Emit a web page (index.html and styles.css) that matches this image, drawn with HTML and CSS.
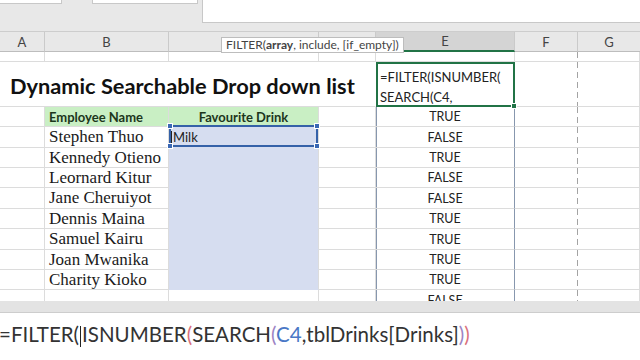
FILE: index.html
```html
<!DOCTYPE html>
<html lang="en">
<head>
    <meta charset="UTF-8">
    <title>Dynamic Searchable Drop down list</title>
    <link rel="stylesheet" href="styles.css">
</head>
<body>

    <div class="ribbon">
        <div class="box box-name"></div>
        <div class="box box-mid"></div>
        <div class="box box-wide"></div>
    </div>

    <div class="sheet">
        <!-- column headers (C and D sit under the tooltip) -->
        <div class="cell hd">A</div>
        <div class="cell hd">B</div>
        <div class="cell hd"></div>
        <div class="cell hd"></div>
        <div class="cell hd hd-on">E</div>
        <div class="cell hd">F</div>
        <div class="cell hd hd-last">G</div>

        <!-- row 1 -->
        <div class="cell"></div><div class="cell"></div><div class="cell"></div><div class="cell"></div>
        <div class="cell"></div><div class="cell pb"></div><div class="cell"></div>

        <!-- row 2 -->
        <div class="cell title">Dynamic Searchable Drop down list</div>
        <div class="cell edit">
            =FILTER(ISNUMBER(<br>SEARCH(C4,
            <span class="handle handle-br green"></span>
        </div>
        <div class="cell pb"></div><div class="cell"></div>

        <!-- row 3 -->
        <div class="cell"></div>
        <div class="cell th">Employee Name</div>
        <div class="cell th th-c">Favourite Drink</div>
        <div class="cell"></div>
        <div class="cell spill">TRUE</div>
        <div class="cell pb"></div><div class="cell"></div>

        <!-- row 4 -->
        <div class="cell"></div>
        <div class="cell name">Stephen Thuo</div>
        <div class="cell fill selected">
            <span class="caret small"></span>Milk
            <span class="sel">
                <span class="handle handle-tl"></span>
                <span class="handle handle-tr"></span>
                <span class="handle handle-bl"></span>
                <span class="handle handle-br"></span>
            </span>
        </div>
        <div class="cell"></div>
        <div class="cell spill">FALSE</div>
        <div class="cell pb"></div><div class="cell"></div>

        <!-- row 5 -->
        <div class="cell"></div>
        <div class="cell name">Kennedy Otieno</div>
        <div class="cell fill"></div>
        <div class="cell"></div>
        <div class="cell spill">TRUE</div>
        <div class="cell pb"></div><div class="cell"></div>

        <!-- row 6 -->
        <div class="cell"></div>
        <div class="cell name">Leornard Kitur</div>
        <div class="cell fill"></div>
        <div class="cell"></div>
        <div class="cell spill">FALSE</div>
        <div class="cell pb"></div><div class="cell"></div>

        <!-- row 7 -->
        <div class="cell"></div>
        <div class="cell name">Jane Cheruiyot</div>
        <div class="cell fill"></div>
        <div class="cell"></div>
        <div class="cell spill">FALSE</div>
        <div class="cell pb"></div><div class="cell"></div>

        <!-- row 8 -->
        <div class="cell"></div>
        <div class="cell name">Dennis Maina</div>
        <div class="cell fill"></div>
        <div class="cell"></div>
        <div class="cell spill">TRUE</div>
        <div class="cell pb"></div><div class="cell"></div>

        <!-- row 9 -->
        <div class="cell"></div>
        <div class="cell name">Samuel Kairu</div>
        <div class="cell fill"></div>
        <div class="cell"></div>
        <div class="cell spill">TRUE</div>
        <div class="cell pb"></div><div class="cell"></div>

        <!-- row 10 -->
        <div class="cell"></div>
        <div class="cell name">Joan Mwanika</div>
        <div class="cell fill"></div>
        <div class="cell"></div>
        <div class="cell spill">TRUE</div>
        <div class="cell pb"></div><div class="cell"></div>

        <!-- row 11 -->
        <div class="cell"></div>
        <div class="cell name">Charity Kioko</div>
        <div class="cell fill"></div>
        <div class="cell"></div>
        <div class="cell spill">TRUE</div>
        <div class="cell pb"></div><div class="cell"></div>

        <!-- row 12 -->
        <div class="cell"></div><div class="cell"></div><div class="cell"></div><div class="cell"></div>
        <div class="cell spill">FALSE</div>
        <div class="cell pb"></div><div class="cell"></div>

        <div class="tip">FILTER(<b>array</b>, include, [if_empty])</div>
    </div>

    <div class="band"></div>

    <div class="formula">=FILTER(<span class="caret"></span>ISNUMBER<span class="p1">(</span>SEARCH<span class="p2">(</span><span class="ref">C4</span>,tblDrinks[Drinks]<span class="p2">)</span><span class="p1">)</span></div>

</body>
</html>
```

FILE: styles.css
```css
* { margin: 0; padding: 0; box-sizing: border-box; }
body {
    width: 640px; height: 360px; overflow: hidden; background: #fff;
    font-family: 'Lato', 'Liberation Sans', sans-serif; color: #222;
}

/* top strip (name box / formula area) */
.ribbon {
    height: 32px; background: #e8e8e8; display: flex; align-items: flex-start;
    border-bottom: 1px solid #cdcdcd;
}
.box { background: #fff; border: 1px solid #c8c8c8; border-top: none; }
.box-name { width: 62px; height: 4px; margin-right: 30px; border-left: none; }
.box-mid { width: 106px; height: 4px; margin-right: 4px; }
.box-wide { flex: 1; height: 23px; border-right: none; }

/* grid */
.sheet {
    position: relative; height: 269px; overflow: hidden; display: grid;
    grid-template-columns: 45px 124px 150px 57px 139px 63px 62px;
    grid-template-rows: 20px 10px 45px 20px 21px 20px 20px 21px 20px 21px 20px 20px 21px 20px;
}
.cell {
    border-right: 1px solid #dcdcdc; border-bottom: 1px solid #dcdcdc;
    font-size: 13px; display: flex; align-items: center; white-space: nowrap;
}
.hd {
    background: #e8e8e8; border-right-color: #cacaca; border-bottom-color: #bdbdbd;
    justify-content: center; color: #444; font-size: 13px;
}
.hd-on { background: #d4d4d4; border-bottom: 2px solid #217346; }
.hd-last { border-right: none; }

.pb {
    border-right: none;
    background: repeating-linear-gradient(to bottom, #a3a3a3 0 6px, transparent 6px 10px) right top / 1px 100% no-repeat;
}

.title {
    grid-column: span 4; font-weight: bold; font-size: 21.8px; padding: 3px 0 0 10px;
    color: #111; border-right-color: transparent;
}
.edit {
    display: block; position: relative; border: 2px solid #217346;
    padding: 3px 0 0 2px; line-height: 20px; font-size: 13px; color: #222;
}

.th { background: #c9efc4; font-weight: bold; font-size: 13px; color: #1c361c; padding-left: 4px; }
.th-c { justify-content: center; padding-left: 0; }

.name {
    font-family: 'Liberation Serif', serif; font-size: 17px; padding-left: 4px; color: #1a1a1a;
}
.fill { background: #d6ddf0; border-bottom-color: #d6ddf0; }

.selected { position: relative; padding-left: 2px; font-size: 13px; }
.sel {
    position: absolute; left: 0; right: 0; top: -2px; bottom: 0;
    border: 2px solid #3561a8;
}
.handle {
    position: absolute; width: 6px; height: 6px; background: #3a68b4;
    border: 1px solid #fff;
}
.handle.green { background: #217346; right: -4px; bottom: -4px; }
.handle-tl { left: -4px; top: -4px; }
.handle-tr { right: -4px; top: -4px; }
.handle-bl { left: -4px; bottom: -4px; }
.handle-br { right: -4px; bottom: -4px; }

.spill {
    justify-content: center; font-size: 12.5px; color: #222;
    border-right-color: #8797ae; box-shadow: inset 1px 0 #8797ae;
}

.caret { display: inline-block; width: 1px; height: 21px; background: #222; vertical-align: middle; margin: 0 1px; }
.caret.small { height: 13px; margin: 0 1px 0 0; }

.tip {
    position: absolute; left: 221px; top: 5px; height: 16px; padding: 0 4px;
    background: #fff; border: 1px solid #bdbdbd; font-size: 12px; line-height: 14px;
    color: #444; white-space: nowrap;
}

/* formula bar */
.band { height: 12px; background: #e3e3e3; border-bottom: 1px solid #cdcdcd; }
.formula {
    height: 47px; background: #fff; font-size: 20.5px; padding-top: 9px;
    color: #333; white-space: nowrap; margin-left: -1px;
}
.p1 { color: #d9707c; }
.p2 { color: #9c83c4; }
.ref { color: #4a78c6; }
```
